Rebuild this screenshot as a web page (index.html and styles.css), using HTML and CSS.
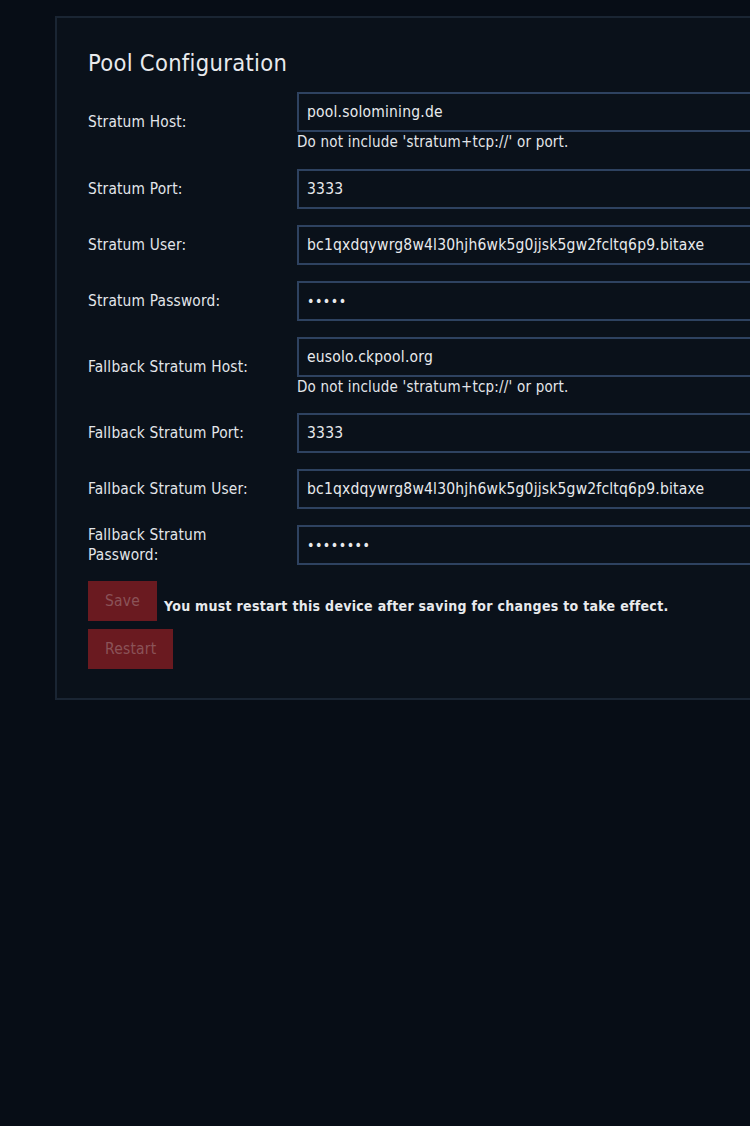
FILE: index.html
```html
<!DOCTYPE html>
<html lang="en">
  <head>
    <meta charset="UTF-8" />
    <meta name="viewport" content="width=device-width, initial-scale=1.0" />
    <title>Pool Configuration</title>

    <link rel="stylesheet" href="styles.css">
  </head>
  <body>
    <div class="wrap">
      <div class="card">
        <h2 class="title">Pool Configuration</h2>

        <div class="row">
          <label class="label">Stratum Host:</label>
          <div class="field">
            <input class="input" type="text" value="pool.solomining.de" />
            <small class="help">Do not include 'stratum+tcp://' or port.</small>
          </div>
        </div>

        <div class="row">
          <label class="label">Stratum Port:</label>
          <div class="field">
            <input class="input" type="text" value="3333" />
          </div>
        </div>

        <div class="row">
          <label class="label">Stratum User:</label>
          <div class="field">
            <input class="input" type="text" value="bc1qxdqywrg8w4l30hjh6wk5g0jjsk5gw2fcltq6p9.bitaxe" />
          </div>
        </div>

        <div class="row">
          <label class="label">Stratum Password:</label>
          <div class="field">
            <input class="input" type="password" value="xxxxx" />
          </div>
        </div>

        <div class="row">
          <label class="label">Fallback Stratum Host:</label>
          <div class="field">
            <input class="input" type="text" value="eusolo.ckpool.org" />
            <small class="help">Do not include 'stratum+tcp://' or port.</small>
          </div>
        </div>

        <div class="row">
          <label class="label">Fallback Stratum Port:</label>
          <div class="field">
            <input class="input" type="text" value="3333" />
          </div>
        </div>

        <div class="row">
          <label class="label">Fallback Stratum User:</label>
          <div class="field">
            <input class="input" type="text" value="bc1qxdqywrg8w4l30hjh6wk5g0jjsk5gw2fcltq6p9.bitaxe" />
          </div>
        </div>

        <div class="row">
          <label class="label">Fallback Stratum<br />Password:</label>
          <div class="field">
            <input class="input" type="password" value="xxxxxxxx" />
          </div>
        </div>

        <div class="actions">
          <button class="btn" disabled>Save</button>
          <b class="note">You must restart this device after saving for changes to take effect.</b>
        </div>
        <div class="actions">
          <button class="btn" disabled>Restart</button>
        </div>
      </div>
    </div>
  </body>
</html>
```

FILE: styles.css
```css
* {
  margin: 0;
  padding: 0;
  box-sizing: border-box;
}

body {
  background: #070d16;
  color: #e8eaed;
  font-family: "Liberation Sans Narrow", "DejaVu Sans Condensed", "Liberation Sans", sans-serif;
  overflow: hidden;
}

.wrap {
  width: 100vw;
  height: 100vh;
  padding: 16px 0 0 55px;
}

.card {
  width: 760px;
  background: #0a111a;
  border: 2px solid #1a2533;
  padding: 31px 32px 21px 31px;
}

.title {
  font-size: 23.5px;
  font-weight: 500;
  letter-spacing: 0.3px;
  margin-bottom: 15px;
}

.row {
  display: flex;
  align-items: center;
  margin-bottom: 16px;
}

.label {
  width: 209px;
  flex: none;
  font-size: 15.3px;
  letter-spacing: 0.2px;
  line-height: 20px;
  color: #e3e6ea;
}

.field {
  flex: 1;
}

.input {
  display: block;
  width: 100%;
  height: 40px;
  background: #0a111a;
  border: 2px solid #2e4260;
  padding: 0 8px;
  color: #e8eaed;
  font-family: inherit;
  font-size: 15.5px;
  letter-spacing: 0.2px;
  outline: none;
}

.input[type="password"] {
  letter-spacing: 0.5px;
  font-size: 14px;
}

.help {
  display: block;
  font-size: 15px;
  letter-spacing: 0.2px;
  line-height: 20.5px;
  color: #e3e6ea;
}

.actions {
  display: flex;
  align-items: center;
  margin-bottom: 8px;
}

.actions:first-of-type {
  margin-top: 1px;
}

.btn {
  height: 40px;
  padding: 0 17px;
  background: #6a1a20;
  border: none;
  color: #8a5358;
  font-family: inherit;
  font-size: 15.5px;
  letter-spacing: 0.2px;
}

.note {
  margin-left: 7px;
  margin-top: 10px;
  font-size: 14px;
  letter-spacing: 0.3px;
}
```
